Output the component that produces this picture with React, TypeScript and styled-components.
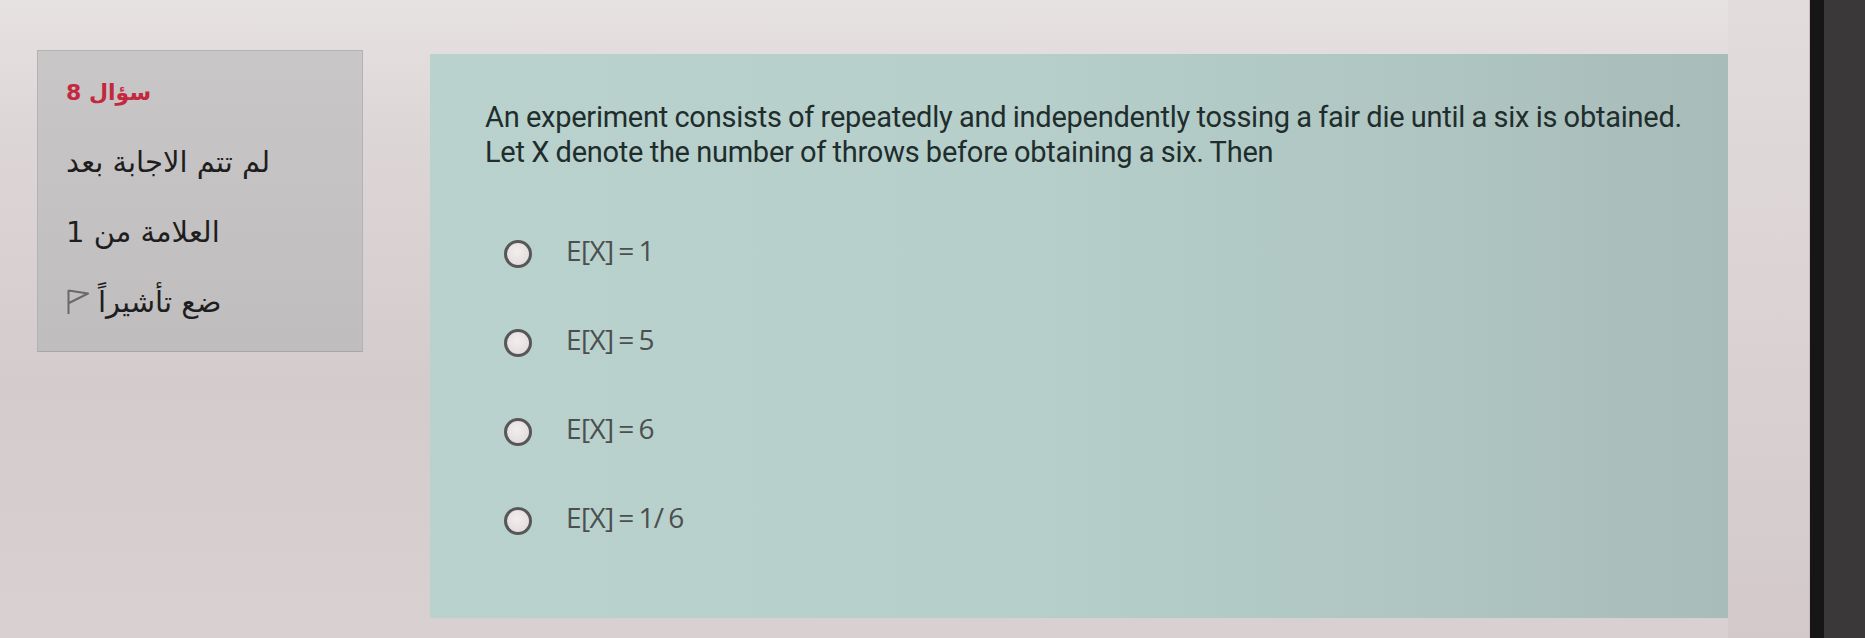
import styled, { createGlobalStyle } from "styled-components";

const GlobalStyle = createGlobalStyle`
  html, body {
    margin: 0;
    padding: 0;
  }
  body {
    width: 1865px;
    height: 638px;
    overflow: hidden;
    font-family: "Open Sans", "DejaVu Sans", sans-serif;
  }
`;

const Screen = styled.div`
  display: flex;
  width: 1865px;
  height: 638px;
  background: linear-gradient(
    180deg,
    #e7e2e2 0%,
    #ddd6d7 20%,
    #d4cbcc 60%,
    #d8d0d1 100%
  );
`;

const Page = styled.div`
  flex: 1;
  display: flex;
  align-items: flex-start;
  gap: 67px;
  padding: 50px 0 0 37px;
`;

const InfoBox = styled.div`
  width: 326px;
  height: 302px;
  box-sizing: border-box;
  padding: 24px 28px 0;
  display: flex;
  flex-direction: column;
  gap: 36px;
  background: linear-gradient(180deg, #c8c6c7 0%, #c0bdbe 100%);
  border: 1px solid #b4b1b2;
  border-bottom-color: #a9a6a7;
  direction: rtl;
  text-align: left;
  font-family: "DejaVu Sans", "Noto Sans", sans-serif;
`;

const InfoLine = styled.div<{ $accent?: boolean }>`
  display: flex;
  align-items: center;
  justify-content: flex-end;
  gap: 8px;
  height: 34px;
  font-size: ${({ $accent }) => ($accent ? "22px" : "29px")};
  font-weight: ${({ $accent }) => ($accent ? 700 : 400)};
  color: ${({ $accent }) => ($accent ? "#c3283d" : "#1e1e1e")};
`;

const FlagIcon = styled.svg`
  width: 24px;
  height: 28px;
  flex: none;
`;

const QuestionCard = styled.div`
  width: 1298px;
  height: 564px;
  margin-top: 4px;
  box-sizing: border-box;
  padding: 46px 0 0 55px;
  background: linear-gradient(
    90deg,
    #b9d2ce 0%,
    #b6cfcb 45%,
    #afc6c2 75%,
    #a8bcb9 100%
  );
`;

const Prompt = styled.div`
  font-family: Roboto, "Liberation Sans", sans-serif;
  font-size: 29px;
  letter-spacing: -0.25px;
  word-spacing: -0.5px;
  line-height: 35px;
  color: #1f2d2c;
`;

const Answers = styled.div`
  display: flex;
  flex-direction: column;
  gap: 53px;
  margin-top: 62px;
  padding-left: 19px;
`;

const AnswerRow = styled.label`
  display: flex;
  align-items: center;
  gap: 34px;
  height: 36px;
`;

const Radio = styled.span`
  width: 28px;
  height: 28px;
  box-sizing: border-box;
  border-radius: 50%;
  border: 3px solid #575757;
  background: radial-gradient(circle at 45% 40%, #f3eeee 0%, #ddd7d7 100%);
  flex: none;
  margin-top: 8px;
`;

const AnswerText = styled.span`
  font-family: "Open Sans", "DejaVu Sans", sans-serif;
  font-size: 28px;
  color: #4b4f4e;
  letter-spacing: -0.6px;
  word-spacing: -2px;
`;

const Margin = styled.div`
  width: 84px;
  background: linear-gradient(180deg, #e2dcdc 0%, #d3c9ca 100%);
  border-right: 1px solid #c6bcbd;
`;

const Bezel = styled.div`
  width: 42px;
  background: #3a3838;
  border-left: 14px solid #161616;
`;

const answers = ["E[X] = 1", "E[X] = 5", "E[X] = 6", "E[X] = 1/ 6"];

export default function App() {
  return (
    <>
      <GlobalStyle />
      <Screen>
        <Page>
          <InfoBox>
            <InfoLine $accent>سؤال 8</InfoLine>
            <InfoLine>لم تتم الاجابة بعد</InfoLine>
            <InfoLine>العلامة من 1</InfoLine>
            <InfoLine>
              ضع تأشيراً
              <FlagIcon viewBox="0 0 24 28" fill="none">
                <path
                  d="M2.5 2 L2.5 26 M2.5 2.5 L22 5.5 L3 15"
                  stroke="#6a6868"
                  strokeWidth="2"
                  strokeLinejoin="round"
                />
              </FlagIcon>
            </InfoLine>
          </InfoBox>
          <QuestionCard>
            <Prompt>
              An experiment consists of repeatedly and independently tossing a
              fair die until a six is obtained.
              <br />
              Let X denote the number of throws before obtaining a six. Then
            </Prompt>
            <Answers>
              {answers.map((a) => (
                <AnswerRow key={a}>
                  <Radio />
                  <AnswerText>{a}</AnswerText>
                </AnswerRow>
              ))}
            </Answers>
          </QuestionCard>
        </Page>
        <Margin />
        <Bezel />
      </Screen>
    </>
  );
}
